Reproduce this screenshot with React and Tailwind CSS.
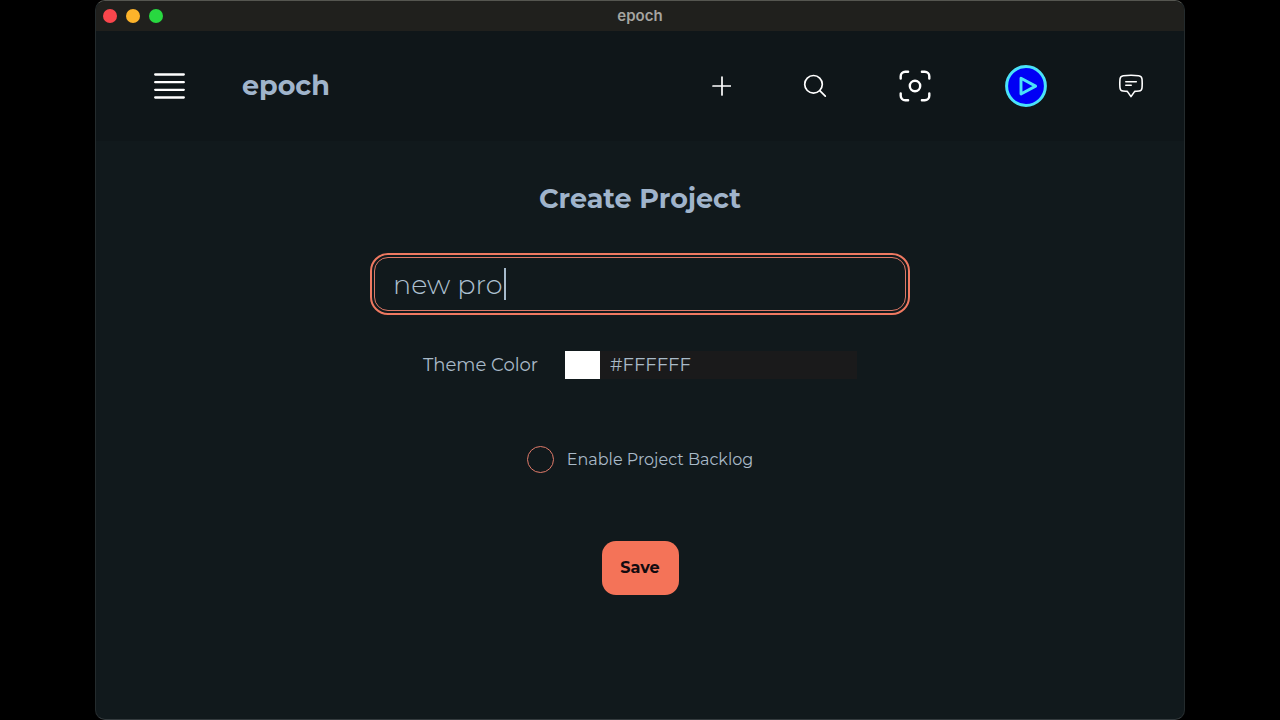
import { useState } from "react";

function TitleBar() {
  return (
    <div className="grid h-[30px] grid-cols-3 items-center bg-[#20201d] px-[7px]">
      <div className="flex gap-[9px]">
        <button type="button" aria-label="Close" className="size-[14px] rounded-full bg-[#fb464c]" />
        <button type="button" aria-label="Minimize" className="size-[14px] rounded-full bg-[#fdb32a]" />
        <button type="button" aria-label="Zoom" className="size-[14px] rounded-full bg-[#28d840]" />
      </div>
      <span className="text-center font-['Inter',sans-serif] text-[15px] leading-5 font-semibold text-[#a5a5a1]">epoch</span>
    </div>
  );
}

function Header() {
  return (
    <header className="flex h-[110px] items-center bg-[#0f1619] pr-[41px] pl-[58px] text-white">
      <button type="button" aria-label="Menu">
        <svg className="h-[26px] w-[31px]" viewBox="0 0 31 26" fill="none" stroke="currentColor" strokeWidth="2.3" strokeLinecap="round">
          <path d="M1.200 1.500h28.600M1.200 9.200h28.600M1.200 16.800h28.600M1.200 24.500h28.600" />
        </svg>
      </button>
      <a href="#home" className="ml-[57px] text-[27px] leading-9 font-bold text-[#a0b4cb]">epoch</a>
      <nav className="ml-auto flex items-center gap-[72px]">
        <button type="button" aria-label="Add">
          <svg className="size-5" viewBox="0 0 20 20" fill="none" stroke="currentColor" strokeWidth="1.7" strokeLinecap="round">
            <path d="M11 1v18M2 10h18" />
          </svg>
        </button>
        <button type="button" aria-label="Search">
          <svg className="size-6" viewBox="0 0 24 24" fill="none" stroke="currentColor" strokeWidth="1.7" strokeLinecap="round">
            <circle cx="10.5" cy="10.3" r="8.8" />
            <path d="M16.800 16.600l5.500 5.500" />
          </svg>
        </button>
        <button type="button" aria-label="Focus">
          <svg className="size-8" viewBox="0 0 32 32" fill="none" stroke="currentColor" strokeWidth="2.4" strokeLinecap="round">
            <path d="M1.7 8.5V6.2a4.5 4.5 0 0 1 4.5-4.5h2.9M22.9 1.7h2.9a4.5 4.5 0 0 1 4.5 4.5v2.3M30.3 23.5v2.3a4.5 4.5 0 0 1-4.5 4.5h-2.9M9.1 30.3H6.2a4.5 4.500 0 0 1-4.5-4.5v-2.3" />
            <circle cx="16" cy="16" r="5.2" />
          </svg>
        </button>
        <button type="button" aria-label="Start timer" className="pl-[2px]">
          <svg className="size-[42px]" viewBox="0 0 42 42" fill="none" stroke="#4ae2f8" strokeWidth="3">
            <circle cx="21" cy="21" r="19.4" fill="#0000f5" />
            <path d="M16 13.200v15.800l14.600-7.900z" strokeWidth="2.900" strokeLinejoin="round" />
          </svg>
        </button>
        <button type="button" aria-label="Feedback">
          <svg className="size-6" viewBox="0 0 24 24" fill="none" stroke="currentColor" strokeWidth="1.6" strokeLinecap="round" strokeLinejoin="round">
            <path d="M4.300 1.700Q12 .9 19.700 1.700 22.700 2 23 5q.4 4.500 0 9-.3 2.800-3 3-2.600.2-4.300.4L12 22.600 8.300 17.400Q6.600 17.200 4 17 1.300 16.800 1 14 .6 9.500 1 5 1.300 2 4.300 1.700z" />
            <path d="M6.800 7.800h10.500M6.800 11.300h5.400" />
          </svg>
        </button>
      </nav>
    </header>
  );
}

export default function App() {
  const [name, setName] = useState("new pro");
  const [color, setColor] = useState("#FFFFFF");

  return (
    <div className="min-h-screen bg-black px-[95px] font-['Montserrat','Inter',sans-serif]">
      <div className="flex min-h-screen flex-col overflow-hidden rounded-[10px] border-x border-t border-b border-x-[#242b2d] border-t-[#555650] border-b-[#343b3e] bg-[#11191c]">
        <TitleBar />
        <Header />
        <main className="flex flex-1 flex-col items-center px-6 pt-10 text-[#a9bac8]">
          <h1 className="text-[27px] leading-9 font-bold text-[#a0b4cb]">Create Project</h1>
          <div className="relative mt-10 w-full max-w-[532px]">
            <input
              type="text"
              aria-label="Project name"
              value={name}
              onChange={(e) => setName(e.target.value)}
              className="block h-[54px] w-full rounded-[14px] border border-[#dd7866] bg-transparent px-[18px] text-[27px] font-light text-[#adc0d0] caret-transparent outline-2 outline-offset-2 outline-[#f07961]"
            />
            <span className="absolute top-[11px] left-[130px] h-8 w-[2px] bg-[#a6bacb]" />
          </div>
          <div className="mt-10 flex w-full max-w-[434px] items-center">
            <label htmlFor="theme" className="text-lg">Theme Color</label>
            <div className="ml-auto flex w-[292px] items-center gap-[10px] bg-[#1a1a1b]">
              <input
                id="swatch"
                type="color"
                aria-label="Pick theme color"
                value={color.toLowerCase()}
                onChange={(e) => setColor(e.target.value.toUpperCase())}
                className="block h-7 w-[35px] appearance-none border-0 bg-transparent p-0 [&::-webkit-color-swatch]:rounded-none [&::-webkit-color-swatch]:border-0 [&::-webkit-color-swatch-wrapper]:p-0"
              />
              <input
                id="theme"
                type="text"
                value={color}
                onChange={(e) => setColor(e.target.value)}
                className="h-7 min-w-0 flex-1 bg-transparent text-lg"
              />
            </div>
          </div>
          <label className="mt-[67px] flex items-center gap-[13px] text-base">
            <input type="checkbox" className="size-[27px] appearance-none rounded-full border border-[#e07a69] checked:bg-[#f47358]" />
            Enable Project Backlog
          </label>
          <button type="button" className="mt-[68px] mb-8 h-[54px] w-[77px] rounded-[14px] bg-[#f47358] text-base font-bold text-[#120b10]">
            Save
          </button>
        </main>
      </div>
    </div>
  );
}
